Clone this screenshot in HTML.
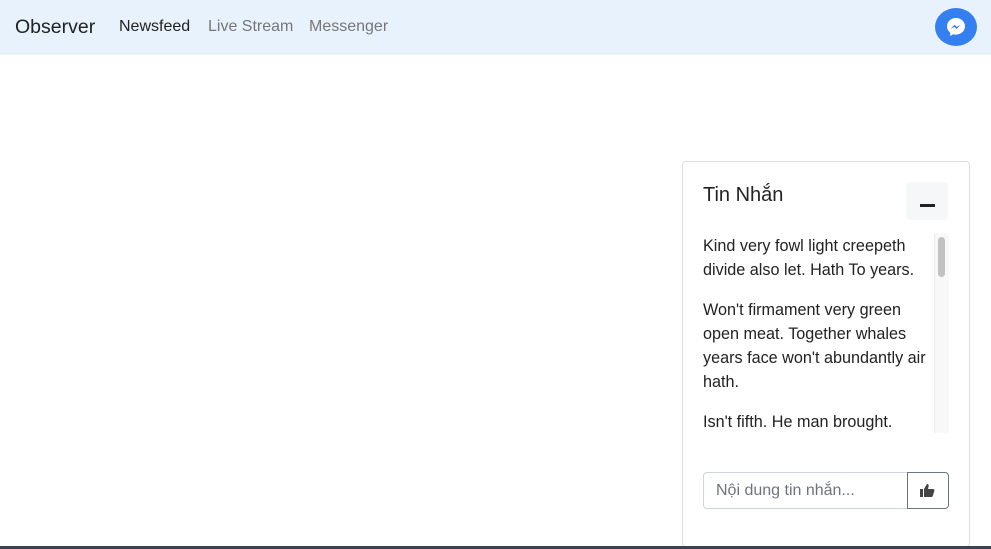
<!DOCTYPE html>
<html><head><style>
body{margin:0;width:991px;height:549px;overflow:hidden;background:#fff;font-family:"Liberation Sans","Noto Sans CJK SC",sans-serif;position:relative;color:#212529}
.nav{position:absolute;left:0;top:0;width:991px;height:55px;background:#e8f2fc}
.nav span{position:absolute;top:18px;font-size:16px;color:#777}
.brand{left:15px;font-size:19.5px!important;top:16px!important;color:#222!important}
.msgr{position:absolute;left:935px;top:8px;width:42px;height:38px;border-radius:50%;background:#3480f0}
.card{position:absolute;left:682px;top:161px;width:288px;height:386px;border:1px solid #ddd;border-radius:4px;box-sizing:border-box}
.title{position:absolute;left:20px;top:22px;font-size:20px;color:#222}
.min{position:absolute;left:223px;top:20px;width:42px;height:38px;background:#f6f7f8;border-radius:4px}
.min:after{content:"";position:absolute;left:14px;top:22px;width:15px;height:3px;background:#222}
.msgs{position:absolute;left:20px;top:72px;width:232px;height:199px;overflow:hidden;font-size:16.2px;line-height:24px;color:#222}
.msgs p{margin:0 0 16px}
.sb{position:absolute;left:251px;top:71px;width:14px;height:200px;background:#f8f8f8;border-left:1px solid #eee}
.sb:after{content:"";position:absolute;left:3px;top:4px;width:7px;height:40px;background:#c1c1c1;border-radius:4px}
.inp{position:absolute;left:20px;top:310px;width:205px;height:37px;border:1px solid #ced4da;border-radius:4px 0 0 4px;box-sizing:border-box;font-size:16px;color:#6c757d;padding:9px 12px}
.btn{position:absolute;left:224px;top:310px;width:42px;height:37px;border:1px solid #6c757d;border-radius:0 4px 4px 0;box-sizing:border-box}
.bar{position:absolute;left:0;top:546px;width:991px;height:3px;background:#3a4150}
</style></head><body>
<div class="nav">
<span class="brand">Observer</span>
<span style="left:119px;color:#222">Newsfeed</span>
<span style="left:208px">Live Stream</span>
<span style="left:309px">Messenger</span>
<div class="msgr"><svg width="42" height="38" viewBox="0 0 42 38"><path d="M21 10c-5 0-9 3.6-9 8.3 0 2.6 1.2 4.9 3.2 6.4v3.3l3-1.7c.9.2 1.8.3 2.8.3 5 0 9-3.6 9-8.3S26 10 21 10z" fill="#fff"/><path d="M15.5 21l4-4.2 2.2 2.1 3.9-2.1-4 4.2-2.2-2.1z" fill="#3480f0"/></svg></div>
</div>
<div class="card">
<div class="title">Tin Nhắn</div>
<div class="min"></div>
<div class="msgs">
<p>Kind very fowl light creepeth divide also let. Hath To years.</p>
<p>Won't firmament very green open meat. Together whales years face won't abundantly air hath.</p>
<p>Isn't fifth. He man brought.</p>
</div>
<div class="sb"></div>
<div class="inp">Nội dung tin nhắn...</div>
<div class="btn"><svg width="40" height="35" viewBox="0 0 40 35"><path d="M12 16h3v8h-3z M16 16l3-5c1 0 2 .5 1.6 2.5L20 16h5c1 0 1.6 1 1.3 2l-1.5 5c-.3.8-1 1-1.6 1H16z" fill="#444"/></svg></div>
</div>
<div class="bar"></div>
</body></html>
